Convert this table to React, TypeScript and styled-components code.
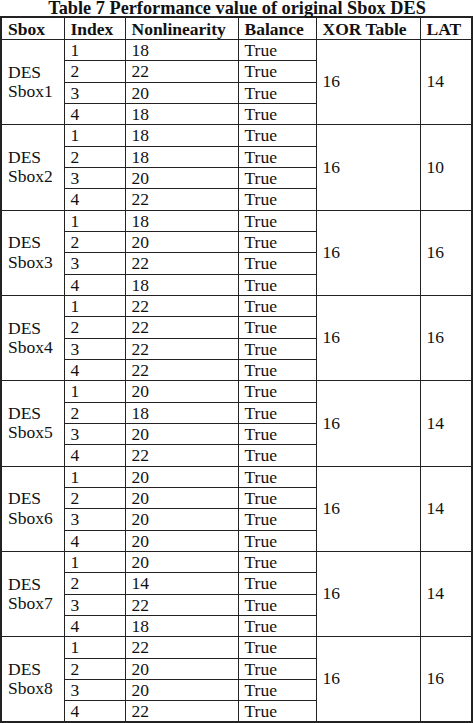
import React from "react";
import styled, { createGlobalStyle } from "styled-components";

const Global = createGlobalStyle`
  html, body { margin: 0; padding: 0; background: #fff; }
  body { font-family: "Liberation Serif", "Times New Roman", serif; color: #111; }
`;

const Page = styled.div`
  width: 474px;
  height: 723px;
  overflow: hidden;
  background: #fff;
`;

const Title = styled.div`
  font-size: 18.3px;
  font-weight: bold;
  line-height: 16px;
  height: 16px;
  text-align: center;
  width: 474px;
`;

const Table = styled.table`
  border-collapse: collapse;
  width: 471px;
  table-layout: fixed;
  border: 2px solid #222;
  font-size: 17.5px;
`;

const HeadCell = styled.th`
  font-weight: bold;
  text-align: left;
  padding: 0 0 0 6px;
  height: 21px;
  border: 1px solid #222;
  white-space: nowrap;
  line-height: 20px;
`;

const Row = styled.tr`
  height: 21.34px;
`;

const Cell = styled.td<{ $span?: boolean }>`
  text-align: left;
  padding: ${(p) => (p.$span ? "0 0 0 6px" : "1px 0 0 6px")};
  border: 1px solid #222;
  vertical-align: middle;
  line-height: ${(p) => (p.$span ? "19.5px" : "19px")};
  white-space: nowrap;
`;

type Group = { name: string; nl: number[]; xor: number; lat: number };

const groups: Group[] = [
  { name: "Sbox1", nl: [18, 22, 20, 18], xor: 16, lat: 14 },
  { name: "Sbox2", nl: [18, 18, 20, 22], xor: 16, lat: 10 },
  { name: "Sbox3", nl: [18, 20, 22, 18], xor: 16, lat: 16 },
  { name: "Sbox4", nl: [22, 22, 22, 22], xor: 16, lat: 16 },
  { name: "Sbox5", nl: [20, 18, 20, 22], xor: 16, lat: 14 },
  { name: "Sbox6", nl: [20, 20, 20, 20], xor: 16, lat: 14 },
  { name: "Sbox7", nl: [20, 14, 22, 18], xor: 16, lat: 14 },
  { name: "Sbox8", nl: [22, 20, 20, 22], xor: 16, lat: 16 },
];

export default function App() {
  return (
    <Page>
      <Global />
      <Title>Table 7 Performance value of original Sbox DES</Title>
      <Table>
        <colgroup>
          <col style={{ width: 63 }} />
          <col style={{ width: 61 }} />
          <col style={{ width: 113 }} />
          <col style={{ width: 78 }} />
          <col style={{ width: 104 }} />
          <col style={{ width: 52 }} />
        </colgroup>
        <thead>
          <tr>
            <HeadCell>Sbox</HeadCell>
            <HeadCell>Index</HeadCell>
            <HeadCell>Nonlinearity</HeadCell>
            <HeadCell>Balance</HeadCell>
            <HeadCell>XOR Table</HeadCell>
            <HeadCell>LAT</HeadCell>
          </tr>
        </thead>
        <tbody>
          {groups.map((g) =>
            g.nl.map((v, i) => (
              <Row key={g.name + i}>
                {i === 0 && (
                  <Cell rowSpan={4} $span>
                    DES
                    <br />
                    {g.name}
                  </Cell>
                )}
                <Cell>{i + 1}</Cell>
                <Cell>{v}</Cell>
                <Cell>True</Cell>
                {i === 0 && (
                  <Cell rowSpan={4} $span>
                    {g.xor}
                  </Cell>
                )}
                {i === 0 && (
                  <Cell rowSpan={4} $span>
                    {g.lat}
                  </Cell>
                )}
              </Row>
            ))
          )}
        </tbody>
      </Table>
    </Page>
  );
}
